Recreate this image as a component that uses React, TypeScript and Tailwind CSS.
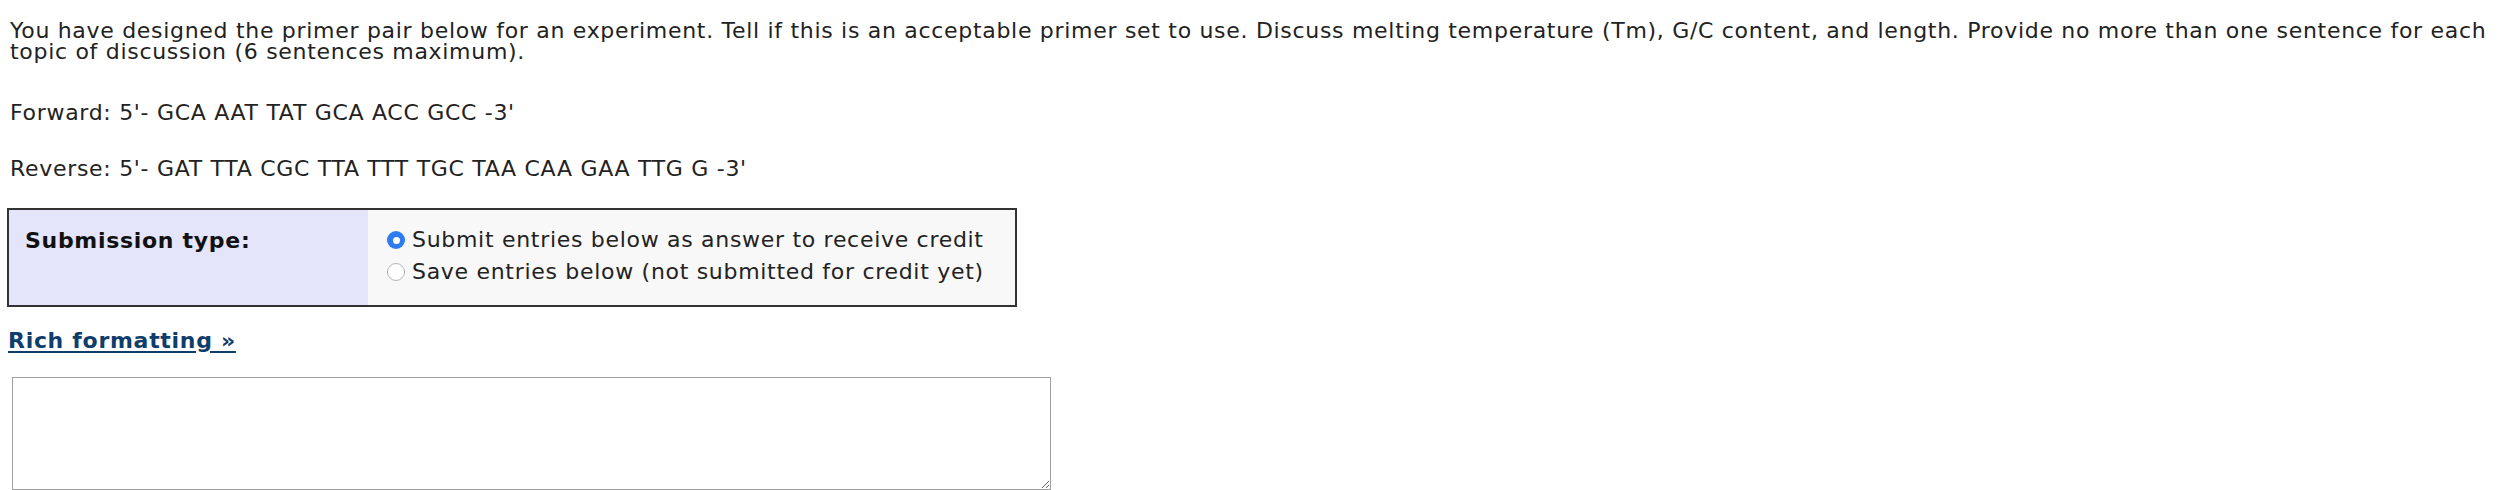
import React from "react";

function Radio({ checked }: { checked: boolean }) {
  return checked ? (
    <span className="inline-flex h-[18px] w-[18px] shrink-0 items-center justify-center rounded-full bg-[#2f7cf0]">
      <span className="h-[7px] w-[7px] rounded-full bg-white" />
    </span>
  ) : (
    <span className="inline-block h-[18px] w-[18px] shrink-0 rounded-full border border-[#b5b5b5] bg-white" />
  );
}

export default function App() {
  return (
    <div className="min-h-[490px] bg-white pl-[10px] pt-[20px] font-['DejaVu_Sans',Verdana,sans-serif] text-[22px] leading-[21px] tracking-[0.7px] text-[#222]">
      <p className="whitespace-nowrap">
        You have designed the primer pair below for an experiment. Tell if this is an acceptable primer set to use. Discuss melting temperature (Tm), G/C content, and length. Provide no more than one sentence for each
        <br />
        topic of discussion (6 sentences maximum).
      </p>
      <p className="mt-[40px] whitespace-nowrap">Forward: 5'- GCA AAT TAT GCA ACC GCC -3'</p>
      <p className="mt-[35px] whitespace-nowrap">Reverse: 5'- GAT TTA CGC TTA TTT TGC TAA CAA GAA TTG G -3'</p>

      <div className="ml-[-3px] mt-[29px] flex h-[99px] w-[1010px] border-2 border-[#333]">
        <div className="w-[359px] bg-[#e4e4fa] pl-[16px] pt-[20px] font-bold text-[#111]">Submission type:</div>
        <div className="flex-1 bg-[#f8f8f8] pl-[19px] pt-[14px] leading-[32px]">
          <label className="flex items-center gap-[7px] whitespace-nowrap">
            <Radio checked />
            <span>Submit entries below as answer to receive credit</span>
          </label>
          <label className="flex items-center gap-[7px] whitespace-nowrap">
            <Radio checked={false} />
            <span>Save entries below (not submitted for credit yet)</span>
          </label>
        </div>
      </div>

      <a href="#" className="ml-[-2px] mt-[23px] inline-block font-bold text-[#0f3d6c] underline underline-offset-[3px]">
        Rich formatting »
      </a>

      <div className="ml-[2px] mt-[26px]">
        <textarea className="block h-[113px] w-[1039px] resize border border-[#a0a0a0] bg-white outline-none" />
      </div>
    </div>
  );
}
